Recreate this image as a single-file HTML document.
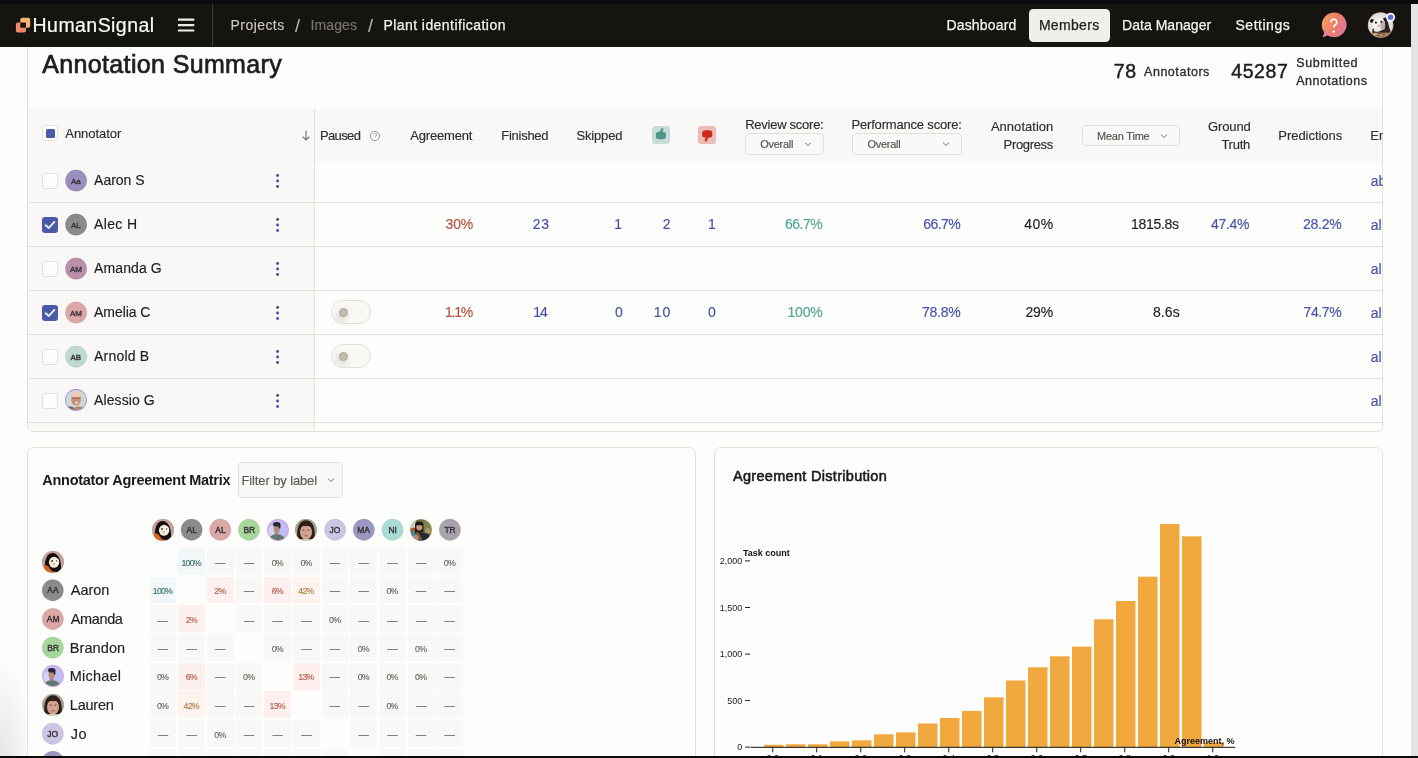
<!DOCTYPE html>
<html lang="en"><head><meta charset="utf-8"><title>Annotation Summary</title>
<style>
html,body{margin:0;padding:0}
body{width:1418px;height:758px;overflow:hidden;position:relative;background:#fdfdfc;font-family:'Liberation Sans', sans-serif;}
#root{position:absolute;left:0;top:0;width:1418px;height:758px;overflow:hidden;will-change:transform}
#root div,#root svg{position:absolute;box-sizing:border-box}
.t{position:absolute;white-space:pre;line-height:1;}
</style></head><body><div id="root">
<div style="left:27px;top:30px;width:1356px;height:402px;border:1px solid #e4e1d9;border-radius:0 0 6px 6px;background:#fdfdfc"></div>
<div style="left:28px;top:109px;width:1354px;height:53px;background:#f9f8f6;"></div>
<div style="left:28px;top:109px;width:286px;height:322px;background:#f9f8f6;border-radius:0 0 0 5px;"></div>
<div style="left:314px;top:109px;width:1px;height:322px;background:#e4e1d9;"></div>
<div style="left:28px;top:202px;width:1354px;height:1px;background:#e4e1d9;"></div>
<div style="left:28px;top:246px;width:1354px;height:1px;background:#e4e1d9;"></div>
<div style="left:28px;top:290px;width:1354px;height:1px;background:#e4e1d9;"></div>
<div style="left:28px;top:334px;width:1354px;height:1px;background:#e4e1d9;"></div>
<div style="left:28px;top:378px;width:1354px;height:1px;background:#e4e1d9;"></div>
<div style="left:28px;top:422px;width:1354px;height:1px;background:#e4e1d9;"></div>
<div style="left:42px;top:125.30000000000001px;width:16px;height:16px;border-radius:3px;background:#fefefd;border:1px solid #e3e0d8"></div>
<div style="left:45.5px;top:128.8px;width:9px;height:9px;border-radius:1.5px;background:#4b5aa9"></div>
<svg style="left:300px;top:129px" width="12" height="13" viewBox="0 0 12 13"><path d="M6 1.5 V11 M2.6 7.6 L6 11 L9.4 7.6" fill="none" stroke="#6f6c66" stroke-width="1.1"/></svg>
<svg style="left:369px;top:130px" width="12" height="12" viewBox="0 0 12 12"><circle cx="6" cy="6" r="4.6" fill="none" stroke="#8f8b82" stroke-width="0.9"/></svg>
<div style="left:652px;top:126px;width:18px;height:18px;border-radius:3.5px;background:#c5ddd6"></div>
<svg style="left:652px;top:126px" width="18" height="18" viewBox="0 0 18 18"><rect x="3.800" y="5.800" width="10.200" height="7.500" rx="3.200" fill="#52958a"/><path d="M8.300 7 L10.300 3.300" stroke="#52958a" stroke-width="2.300" stroke-linecap="round"/></svg>
<div style="left:698px;top:126px;width:18px;height:18px;border-radius:3.5px;background:#ecbcb7"></div>
<svg style="left:698px;top:126px" width="18" height="18" viewBox="0 0 18 18"><rect x="4.100" y="4.300" width="10.200" height="7.300" rx="3.200" fill="#cb2a1d"/><path d="M9.600 10.500 L7.800 14.400" stroke="#cb2a1d" stroke-width="2.300" stroke-linecap="round"/></svg>
<div style="left:745px;top:133.4px;width:78.5px;height:21.6px;border:1px solid #e3e0d8;border-radius:4px;background:#faf9f7"></div>
<svg style="left:803px;top:140.3px" width="10" height="8" viewBox="0 0 10 8"><path d="M2 2.6 L5 5.5 L8 2.6" fill="none" stroke="#7b7870" stroke-width="1"/></svg>
<div style="left:852px;top:133.4px;width:109.5px;height:21.6px;border:1px solid #e3e0d8;border-radius:4px;background:#faf9f7"></div>
<svg style="left:941.1px;top:140.3px" width="10" height="8" viewBox="0 0 10 8"><path d="M2 2.6 L5 5.5 L8 2.6" fill="none" stroke="#7b7870" stroke-width="1"/></svg>
<div style="left:1081.5px;top:125px;width:98px;height:21px;border:1px solid #e3e0d8;border-radius:4px;background:#faf9f7"></div>
<svg style="left:1159px;top:131.7px" width="10" height="8" viewBox="0 0 10 8"><path d="M2 2.6 L5 5.5 L8 2.6" fill="none" stroke="#7b7870" stroke-width="1"/></svg>
<div style="left:42px;top:172.5px;width:16px;height:16px;border-radius:3px;background:#fefefd;border:1px solid #e3e0d8"></div>
<svg style="left:64px;top:168px" width="24" height="24" viewBox="64 168 24 24"><circle cx="76.100" cy="180.55" r="10.750" fill="#9b90bd" stroke="rgba(0,0,0,.07)" stroke-width=".8"/></svg>
<svg style="left:272px;top:171.5px" width="12" height="18" viewBox="0 0 12 18"><circle cx="5.600" cy="3.5" r="1.450" fill="#3f4da3"/><circle cx="5.600" cy="9" r="1.450" fill="#3f4da3"/><circle cx="5.600" cy="14.5" r="1.450" fill="#3f4da3"/></svg>
<div style="left:42px;top:216.5px;width:16px;height:16px;border-radius:3px;background:#4b5aa9"></div>
<svg style="left:42px;top:216.5px" width="16" height="16" viewBox="0 0 16 16"><path d="M3.6 8.2 L6.7 11 L12.4 4.9" fill="none" stroke="#fff" stroke-width="1.7" stroke-linecap="round" stroke-linejoin="round"/></svg>
<svg style="left:64px;top:212px" width="24" height="24" viewBox="64 212 24 24"><circle cx="76.100" cy="224.55" r="10.750" fill="#8b8b8d" stroke="rgba(0,0,0,.07)" stroke-width=".8"/></svg>
<svg style="left:272px;top:215.5px" width="12" height="18" viewBox="0 0 12 18"><circle cx="5.600" cy="3.5" r="1.450" fill="#3f4da3"/><circle cx="5.600" cy="9" r="1.450" fill="#3f4da3"/><circle cx="5.600" cy="14.5" r="1.450" fill="#3f4da3"/></svg>
<div style="left:42px;top:260.5px;width:16px;height:16px;border-radius:3px;background:#fefefd;border:1px solid #e3e0d8"></div>
<svg style="left:64px;top:256px" width="24" height="24" viewBox="64 256 24 24"><circle cx="76.100" cy="268.55" r="10.750" fill="#b890a9" stroke="rgba(0,0,0,.07)" stroke-width=".8"/></svg>
<svg style="left:272px;top:259.5px" width="12" height="18" viewBox="0 0 12 18"><circle cx="5.600" cy="3.5" r="1.450" fill="#3f4da3"/><circle cx="5.600" cy="9" r="1.450" fill="#3f4da3"/><circle cx="5.600" cy="14.5" r="1.450" fill="#3f4da3"/></svg>
<div style="left:42px;top:304.5px;width:16px;height:16px;border-radius:3px;background:#4b5aa9"></div>
<svg style="left:42px;top:304.5px" width="16" height="16" viewBox="0 0 16 16"><path d="M3.6 8.2 L6.7 11 L12.4 4.9" fill="none" stroke="#fff" stroke-width="1.7" stroke-linecap="round" stroke-linejoin="round"/></svg>
<svg style="left:64px;top:300px" width="24" height="24" viewBox="64 300 24 24"><circle cx="76.100" cy="312.55" r="10.750" fill="#dca7a7" stroke="rgba(0,0,0,.07)" stroke-width=".8"/></svg>
<svg style="left:272px;top:303.5px" width="12" height="18" viewBox="0 0 12 18"><circle cx="5.600" cy="3.5" r="1.450" fill="#3f4da3"/><circle cx="5.600" cy="9" r="1.450" fill="#3f4da3"/><circle cx="5.600" cy="14.5" r="1.450" fill="#3f4da3"/></svg>
<div style="left:42px;top:348.5px;width:16px;height:16px;border-radius:3px;background:#fefefd;border:1px solid #e3e0d8"></div>
<svg style="left:64px;top:344px" width="24" height="24" viewBox="64 344 24 24"><circle cx="76.100" cy="356.55" r="10.750" fill="#bdd9d1" stroke="rgba(0,0,0,.07)" stroke-width=".8"/></svg>
<svg style="left:272px;top:347.5px" width="12" height="18" viewBox="0 0 12 18"><circle cx="5.600" cy="3.5" r="1.450" fill="#3f4da3"/><circle cx="5.600" cy="9" r="1.450" fill="#3f4da3"/><circle cx="5.600" cy="14.5" r="1.450" fill="#3f4da3"/></svg>
<div style="left:42px;top:392.5px;width:16px;height:16px;border-radius:3px;background:#fefefd;border:1px solid #e3e0d8"></div>
<svg style="left:65px;top:389.0px" width="22" height="22" viewBox="0 0 22 22"><defs><clipPath id="ag"><circle cx="11" cy="11" r="10.100"/></clipPath></defs><circle cx="11" cy="11" r="10.900" fill="#a08fd8"/><g clip-path="url(#ag)"><rect width="22" height="22" fill="#c9dbe0"/><ellipse cx="5" cy="21" rx="5" ry="3.500" fill="#5d6259"/><ellipse cx="14" cy="22" rx="7" ry="4.500" fill="#b08a62"/><ellipse cx="11.300" cy="9.500" rx="5.400" ry="7.800" fill="#e7b9a5"/><ellipse cx="11" cy="12" rx="4.600" ry="4" fill="#c98f7a"/><rect x="6.200" y="8.400" width="9.600" height="1.500" rx=".7" fill="#a86a58"/><ellipse cx="11.300" cy="5" rx="4.600" ry="3" fill="#efc8b6"/><ellipse cx="11.500" cy="13.600" rx="1.700" ry=".8" fill="#f6efe6"/></g></svg>
<svg style="left:272px;top:391.5px" width="12" height="18" viewBox="0 0 12 18"><circle cx="5.600" cy="3.5" r="1.450" fill="#3f4da3"/><circle cx="5.600" cy="9" r="1.450" fill="#3f4da3"/><circle cx="5.600" cy="14.5" r="1.450" fill="#3f4da3"/></svg>
<div style="left:331px;top:300.4px;width:40px;height:24px;border-radius:12px;border:1px solid #e3e0d8;background:#f8f7f4"></div>
<div style="left:338.5px;top:307.59999999999997px;width:9.6px;height:9.6px;border-radius:50%;background:#c3bdaf;border:0.8px solid #aea797;box-shadow:-2px 3px 6px rgba(60,50,30,.18)"></div>
<div style="left:331px;top:344.4px;width:40px;height:24px;border-radius:12px;border:1px solid #e3e0d8;background:#f8f7f4"></div>
<div style="left:338.5px;top:351.59999999999997px;width:9.6px;height:9.6px;border-radius:50%;background:#c3bdaf;border:0.8px solid #aea797;box-shadow:-2px 3px 6px rgba(60,50,30,.18)"></div>
<div style="left:27px;top:447px;width:669px;height:340px;border:1px solid #e4e1d9;border-radius:7px;background:#fdfdfc"></div>
<div style="left:714px;top:447px;width:669px;height:340px;border:1px solid #e4e1d9;border-radius:7px;background:#fdfdfc"></div>
<div style="left:237.5px;top:462px;width:105px;height:35.5px;border:1px solid #e3e0d8;border-radius:4px;background:#f9f8f6"></div>
<svg style="left:326px;top:476.3px" width="10" height="8" viewBox="0 0 10 8"><path d="M2 2.6 L5 5.5 L8 2.6" fill="none" stroke="#7b7870" stroke-width="1"/></svg>
<svg style="left:151.90px;top:518.80px" width="22" height="22" viewBox="0 0 22 22"><defs><clipPath id="c0"><circle cx="11" cy="11" r="10.9"/></clipPath></defs><circle cx="11" cy="11" r="10.900" fill="#c6a3a1"/><g clip-path="url(#c0)"><rect width="22" height="22" fill="#c4a09e"/><path d="M3 17 C2 8 6 2 10.500 2 C15.500 2 19.500 8 19 18 L15 21 L5 20z" fill="#15100f"/><path d="M1.500 13.500 L6 15 L11 21.500 L3 21z" fill="#d8641f"/><ellipse cx="12" cy="11.300" rx="5.100" ry="5.500" fill="#f1e9d6"/><ellipse cx="14.800" cy="11" rx="2.300" ry="3.600" fill="#fbf9f3"/><circle cx="10" cy="9.900" r=".9" fill="#3a2e22"/><circle cx="14.600" cy="9.900" r=".8" fill="#6b6a60"/><ellipse cx="12" cy="12.800" rx="1" ry=".9" fill="#e79c92"/></g></svg>
<svg style="left:179px;top:517px" width="24" height="24" viewBox="179 517 24 24"><circle cx="191.60" cy="529.80" r="10.700" fill="#8b8b8d" stroke="rgba(0,0,0,.08)" stroke-width=".8"/></svg>
<svg style="left:208px;top:517px" width="24" height="24" viewBox="208 517 24 24"><circle cx="220.30" cy="529.80" r="10.700" fill="#dca7a7" stroke="rgba(0,0,0,.08)" stroke-width=".8"/></svg>
<svg style="left:237px;top:517px" width="24" height="24" viewBox="237 517 24 24"><circle cx="249.00" cy="529.80" r="10.700" fill="#a6d89b" stroke="rgba(0,0,0,.08)" stroke-width=".8"/></svg>
<svg style="left:266.70px;top:518.80px" width="22" height="22" viewBox="0 0 22 22"><defs><clipPath id="c4"><circle cx="11" cy="11" r="10.2"/></clipPath></defs><circle cx="11" cy="11" r="10.900" fill="#d79ad3"/><g clip-path="url(#c4)"><rect width="22" height="22" fill="#bebef3"/><ellipse cx="4.500" cy="13" rx="3" ry="6" fill="#d2d2f8"/><ellipse cx="9.800" cy="20.300" rx="7.800" ry="5" fill="#5f796c"/><rect x="8.200" y="12" width="3" height="4" fill="#a87a68"/><ellipse cx="9.600" cy="9.800" rx="3" ry="4.200" fill="#b98b79"/><ellipse cx="9.700" cy="5.300" rx="3.700" ry="2.300" fill="#2b2430"/><ellipse cx="12.500" cy="7.500" rx="1" ry="2.200" fill="#2b2430"/></g></svg>
<svg style="left:295.40px;top:518.80px" width="22" height="22" viewBox="0 0 22 22"><defs><clipPath id="c5"><circle cx="11" cy="11" r="10.9"/></clipPath></defs><circle cx="11" cy="11" r="10.900" fill="#a9a48f"/><g clip-path="url(#c5)"><rect width="22" height="22" fill="#a9a48f"/><path d="M2.500 20 C1 8 5 1.300 11 1.300 C17 1.300 21 8 19.500 20z" fill="#2c201b"/><ellipse cx="11" cy="13" rx="6" ry="7.600" fill="#d2a48f"/><path d="M5 9 C6 4.500 9 4.600 11 5.600 C13 4.600 16 4.500 17 9 C15 6.500 13 6.800 11 7.200 C9 6.800 7 6.500 5 9z" fill="#2c201b"/><ellipse cx="8.600" cy="11" rx="1.200" ry=".6" fill="#5a4036"/><ellipse cx="13.400" cy="11" rx="1.200" ry=".6" fill="#5a4036"/><ellipse cx="11" cy="16.600" rx="2.200" ry=".9" fill="#b86d72"/><rect x="7" y="20.500" width="8" height="2" fill="#dfe0d6"/></g></svg>
<svg style="left:323px;top:517px" width="24" height="24" viewBox="323 517 24 24"><circle cx="335.10" cy="529.80" r="10.700" fill="#cdc4e6" stroke="rgba(0,0,0,.08)" stroke-width=".8"/></svg>
<svg style="left:351px;top:517px" width="24" height="24" viewBox="351 517 24 24"><circle cx="363.80" cy="529.80" r="10.700" fill="#9a98c1" stroke="rgba(0,0,0,.08)" stroke-width=".8"/></svg>
<svg style="left:380px;top:517px" width="24" height="24" viewBox="380 517 24 24"><circle cx="392.50" cy="529.80" r="10.700" fill="#a9dcd5" stroke="rgba(0,0,0,.08)" stroke-width=".8"/></svg>
<svg style="left:410.20px;top:518.80px" width="22" height="22" viewBox="0 0 22 22"><defs><clipPath id="c9"><circle cx="11" cy="11" r="10.5"/></clipPath></defs><circle cx="11" cy="11" r="10.900" fill="#a4b184"/><g clip-path="url(#c9)"><rect width="22" height="22" fill="#6b6d3c"/><ellipse cx="17" cy="7" rx="5" ry="6" fill="#7f8446"/><ellipse cx="18" cy="12" rx="3" ry="3" fill="#a79a63"/><ellipse cx="3" cy="6" rx="4" ry="5" fill="#cfd3cf"/><path d="M9 13 L19 15 L20 22 L8 22z" fill="#232830"/><ellipse cx="2.800" cy="15" rx="2.400" ry="3.500" fill="#3c8aa6"/><ellipse cx="3.200" cy="10.500" rx="2.200" ry="2" fill="#a9512b"/><path d="M5 5 C5 1.500 13 1.500 13.500 5 L13.500 13 L5 15z" fill="#2a1d19"/><ellipse cx="9.300" cy="7.800" rx="3" ry="3.800" fill="#c79b86"/><rect x="5.800" y="3.800" width="7.200" height="2.500" rx="1.100" fill="#16161a"/><path d="M7 13 C9 14 11 17 12 21 L8 21 C8 18 6 15 5 14z" fill="#8a5a36"/><ellipse cx="5.500" cy="18.500" rx="3" ry="2.500" fill="#b9868a"/></g></svg>
<svg style="left:437px;top:517px" width="24" height="24" viewBox="437 517 24 24"><circle cx="449.90" cy="529.80" r="10.700" fill="#a9a1ab" stroke="rgba(0,0,0,.08)" stroke-width=".8"/></svg>
<svg style="left:41.80px;top:550.60px" width="22" height="22" viewBox="0 0 22 22"><defs><clipPath id="r0"><circle cx="11" cy="11" r="10.9"/></clipPath></defs><circle cx="11" cy="11" r="10.900" fill="#c6a3a1"/><g clip-path="url(#r0)"><rect width="22" height="22" fill="#c4a09e"/><path d="M3 17 C2 8 6 2 10.500 2 C15.500 2 19.500 8 19 18 L15 21 L5 20z" fill="#15100f"/><path d="M1.500 13.500 L6 15 L11 21.500 L3 21z" fill="#d8641f"/><ellipse cx="12" cy="11.300" rx="5.100" ry="5.500" fill="#f1e9d6"/><ellipse cx="14.800" cy="11" rx="2.300" ry="3.600" fill="#fbf9f3"/><circle cx="10" cy="9.900" r=".9" fill="#3a2e22"/><circle cx="14.600" cy="9.900" r=".8" fill="#6b6a60"/><ellipse cx="12" cy="12.800" rx="1" ry=".9" fill="#e79c92"/></g></svg>
<div style="left:178.28px;top:548.0px;width:26.8px;height:26.8px;background:#f2f8f9;"></div>
<div style="left:206.96px;top:548.0px;width:26.8px;height:26.8px;background:#f9f8f6;"></div>
<div style="left:235.64px;top:548.0px;width:26.8px;height:26.8px;background:#f9f8f6;"></div>
<div style="left:264.32px;top:548.0px;width:26.8px;height:26.8px;background:#f9f8f6;"></div>
<div style="left:293.0px;top:548.0px;width:26.8px;height:26.8px;background:#f9f8f6;"></div>
<div style="left:321.68px;top:548.0px;width:26.8px;height:26.8px;background:#f9f8f6;"></div>
<div style="left:350.36px;top:548.0px;width:26.8px;height:26.8px;background:#f9f8f6;"></div>
<div style="left:379.04px;top:548.0px;width:26.8px;height:26.8px;background:#f9f8f6;"></div>
<div style="left:407.72px;top:548.0px;width:26.8px;height:26.8px;background:#f9f8f6;"></div>
<div style="left:436.4px;top:548.0px;width:26.8px;height:26.8px;background:#f9f8f6;"></div>
<svg style="left:40px;top:578px" width="24" height="24" viewBox="40 578 24 24"><circle cx="52.80" cy="590.28" r="10.700" fill="#8b8b8d" stroke="rgba(0,0,0,.08)" stroke-width=".8"/></svg>
<div style="left:149.6px;top:576.68px;width:26.8px;height:26.8px;background:#f2f8f9;"></div>
<div style="left:206.96px;top:576.68px;width:26.8px;height:26.8px;background:#fdf0ee;"></div>
<div style="left:235.64px;top:576.68px;width:26.8px;height:26.8px;background:#f9f8f6;"></div>
<div style="left:264.32px;top:576.68px;width:26.8px;height:26.8px;background:#fdf0ee;"></div>
<div style="left:293.0px;top:576.68px;width:26.8px;height:26.8px;background:#fef4ed;"></div>
<div style="left:321.68px;top:576.68px;width:26.8px;height:26.8px;background:#f9f8f6;"></div>
<div style="left:350.36px;top:576.68px;width:26.8px;height:26.8px;background:#f9f8f6;"></div>
<div style="left:379.04px;top:576.68px;width:26.8px;height:26.8px;background:#f9f8f6;"></div>
<div style="left:407.72px;top:576.68px;width:26.8px;height:26.8px;background:#f9f8f6;"></div>
<div style="left:436.4px;top:576.68px;width:26.8px;height:26.8px;background:#f9f8f6;"></div>
<svg style="left:40px;top:606px" width="24" height="24" viewBox="40 606 24 24"><circle cx="52.80" cy="618.96" r="10.700" fill="#dca7a7" stroke="rgba(0,0,0,.08)" stroke-width=".8"/></svg>
<div style="left:149.6px;top:605.36px;width:26.8px;height:26.8px;background:#f9f8f6;"></div>
<div style="left:178.28px;top:605.36px;width:26.8px;height:26.8px;background:#fdf0ee;"></div>
<div style="left:235.64px;top:605.36px;width:26.8px;height:26.8px;background:#f9f8f6;"></div>
<div style="left:264.32px;top:605.36px;width:26.8px;height:26.8px;background:#f9f8f6;"></div>
<div style="left:293.0px;top:605.36px;width:26.8px;height:26.8px;background:#f9f8f6;"></div>
<div style="left:321.68px;top:605.36px;width:26.8px;height:26.8px;background:#f9f8f6;"></div>
<div style="left:350.36px;top:605.36px;width:26.8px;height:26.8px;background:#f9f8f6;"></div>
<div style="left:379.04px;top:605.36px;width:26.8px;height:26.8px;background:#f9f8f6;"></div>
<div style="left:407.72px;top:605.36px;width:26.8px;height:26.8px;background:#f9f8f6;"></div>
<div style="left:436.4px;top:605.36px;width:26.8px;height:26.8px;background:#f9f8f6;"></div>
<svg style="left:40px;top:635px" width="24" height="24" viewBox="40 635 24 24"><circle cx="52.80" cy="647.64" r="10.700" fill="#a6d89b" stroke="rgba(0,0,0,.08)" stroke-width=".8"/></svg>
<div style="left:149.6px;top:634.04px;width:26.8px;height:26.8px;background:#f9f8f6;"></div>
<div style="left:178.28px;top:634.04px;width:26.8px;height:26.8px;background:#f9f8f6;"></div>
<div style="left:206.96px;top:634.04px;width:26.8px;height:26.8px;background:#f9f8f6;"></div>
<div style="left:264.32px;top:634.04px;width:26.8px;height:26.8px;background:#f9f8f6;"></div>
<div style="left:293.0px;top:634.04px;width:26.8px;height:26.8px;background:#f9f8f6;"></div>
<div style="left:321.68px;top:634.04px;width:26.8px;height:26.8px;background:#f9f8f6;"></div>
<div style="left:350.36px;top:634.04px;width:26.8px;height:26.8px;background:#f9f8f6;"></div>
<div style="left:379.04px;top:634.04px;width:26.8px;height:26.8px;background:#f9f8f6;"></div>
<div style="left:407.72px;top:634.04px;width:26.8px;height:26.8px;background:#f9f8f6;"></div>
<div style="left:436.4px;top:634.04px;width:26.8px;height:26.8px;background:#f9f8f6;"></div>
<svg style="left:41.80px;top:665.32px" width="22" height="22" viewBox="0 0 22 22"><defs><clipPath id="r4"><circle cx="11" cy="11" r="10.2"/></clipPath></defs><circle cx="11" cy="11" r="10.900" fill="#d79ad3"/><g clip-path="url(#r4)"><rect width="22" height="22" fill="#bebef3"/><ellipse cx="4.500" cy="13" rx="3" ry="6" fill="#d2d2f8"/><ellipse cx="9.800" cy="20.300" rx="7.800" ry="5" fill="#5f796c"/><rect x="8.200" y="12" width="3" height="4" fill="#a87a68"/><ellipse cx="9.600" cy="9.800" rx="3" ry="4.200" fill="#b98b79"/><ellipse cx="9.700" cy="5.300" rx="3.700" ry="2.300" fill="#2b2430"/><ellipse cx="12.500" cy="7.500" rx="1" ry="2.200" fill="#2b2430"/></g></svg>
<div style="left:149.6px;top:662.72px;width:26.8px;height:26.8px;background:#f9f8f6;"></div>
<div style="left:178.28px;top:662.72px;width:26.8px;height:26.8px;background:#fdf0ee;"></div>
<div style="left:206.96px;top:662.72px;width:26.8px;height:26.8px;background:#f9f8f6;"></div>
<div style="left:235.64px;top:662.72px;width:26.8px;height:26.8px;background:#f9f8f6;"></div>
<div style="left:293.0px;top:662.72px;width:26.8px;height:26.8px;background:#fdf0ee;"></div>
<div style="left:321.68px;top:662.72px;width:26.8px;height:26.8px;background:#f9f8f6;"></div>
<div style="left:350.36px;top:662.72px;width:26.8px;height:26.8px;background:#f9f8f6;"></div>
<div style="left:379.04px;top:662.72px;width:26.8px;height:26.8px;background:#f9f8f6;"></div>
<div style="left:407.72px;top:662.72px;width:26.8px;height:26.8px;background:#f9f8f6;"></div>
<div style="left:436.4px;top:662.72px;width:26.8px;height:26.8px;background:#f9f8f6;"></div>
<svg style="left:41.80px;top:694.00px" width="22" height="22" viewBox="0 0 22 22"><defs><clipPath id="r5"><circle cx="11" cy="11" r="10.9"/></clipPath></defs><circle cx="11" cy="11" r="10.900" fill="#a9a48f"/><g clip-path="url(#r5)"><rect width="22" height="22" fill="#a9a48f"/><path d="M2.500 20 C1 8 5 1.300 11 1.300 C17 1.300 21 8 19.500 20z" fill="#2c201b"/><ellipse cx="11" cy="13" rx="6" ry="7.600" fill="#d2a48f"/><path d="M5 9 C6 4.500 9 4.600 11 5.600 C13 4.600 16 4.500 17 9 C15 6.500 13 6.800 11 7.200 C9 6.800 7 6.500 5 9z" fill="#2c201b"/><ellipse cx="8.600" cy="11" rx="1.200" ry=".6" fill="#5a4036"/><ellipse cx="13.400" cy="11" rx="1.200" ry=".6" fill="#5a4036"/><ellipse cx="11" cy="16.600" rx="2.200" ry=".9" fill="#b86d72"/><rect x="7" y="20.500" width="8" height="2" fill="#dfe0d6"/></g></svg>
<div style="left:149.6px;top:691.4px;width:26.8px;height:26.8px;background:#f9f8f6;"></div>
<div style="left:178.28px;top:691.4px;width:26.8px;height:26.8px;background:#fef4ed;"></div>
<div style="left:206.96px;top:691.4px;width:26.8px;height:26.8px;background:#f9f8f6;"></div>
<div style="left:235.64px;top:691.4px;width:26.8px;height:26.8px;background:#f9f8f6;"></div>
<div style="left:264.32px;top:691.4px;width:26.8px;height:26.8px;background:#fdf0ee;"></div>
<div style="left:321.68px;top:691.4px;width:26.8px;height:26.8px;background:#f9f8f6;"></div>
<div style="left:350.36px;top:691.4px;width:26.8px;height:26.8px;background:#f9f8f6;"></div>
<div style="left:379.04px;top:691.4px;width:26.8px;height:26.8px;background:#f9f8f6;"></div>
<div style="left:407.72px;top:691.4px;width:26.8px;height:26.8px;background:#f9f8f6;"></div>
<div style="left:436.4px;top:691.4px;width:26.8px;height:26.8px;background:#f9f8f6;"></div>
<svg style="left:40px;top:721px" width="24" height="24" viewBox="40 721 24 24"><circle cx="52.80" cy="733.68" r="10.700" fill="#cdc4e6" stroke="rgba(0,0,0,.08)" stroke-width=".8"/></svg>
<div style="left:149.6px;top:720.08px;width:26.8px;height:26.8px;background:#f9f8f6;"></div>
<div style="left:178.28px;top:720.08px;width:26.8px;height:26.8px;background:#f9f8f6;"></div>
<div style="left:206.96px;top:720.08px;width:26.8px;height:26.8px;background:#f9f8f6;"></div>
<div style="left:235.64px;top:720.08px;width:26.8px;height:26.8px;background:#f9f8f6;"></div>
<div style="left:264.32px;top:720.08px;width:26.8px;height:26.8px;background:#f9f8f6;"></div>
<div style="left:293.0px;top:720.08px;width:26.8px;height:26.8px;background:#f9f8f6;"></div>
<div style="left:350.36px;top:720.08px;width:26.8px;height:26.8px;background:#f9f8f6;"></div>
<div style="left:379.04px;top:720.08px;width:26.8px;height:26.8px;background:#f9f8f6;"></div>
<div style="left:407.72px;top:720.08px;width:26.8px;height:26.8px;background:#f9f8f6;"></div>
<div style="left:436.4px;top:720.08px;width:26.8px;height:26.8px;background:#f9f8f6;"></div>
<div style="left:41.8px;top:751.36px;width:22px;height:22px;border-radius:50%;background:#9a98c1"></div>
<div style="left:149.6px;top:748.76px;width:26.8px;height:26.8px;background:#f9f8f6;"></div>
<div style="left:178.28px;top:748.76px;width:26.8px;height:26.8px;background:#f9f8f6;"></div>
<div style="left:206.96px;top:748.76px;width:26.8px;height:26.8px;background:#f9f8f6;"></div>
<div style="left:235.64px;top:748.76px;width:26.8px;height:26.8px;background:#f9f8f6;"></div>
<div style="left:264.32px;top:748.76px;width:26.8px;height:26.8px;background:#f9f8f6;"></div>
<div style="left:293.0px;top:748.76px;width:26.8px;height:26.8px;background:#f9f8f6;"></div>
<div style="left:321.68px;top:748.76px;width:26.8px;height:26.8px;background:#f9f8f6;"></div>
<div style="left:379.04px;top:748.76px;width:26.8px;height:26.8px;background:#f9f8f6;"></div>
<div style="left:407.72px;top:748.76px;width:26.8px;height:26.8px;background:#f9f8f6;"></div>
<div style="left:436.4px;top:748.76px;width:26.8px;height:26.8px;background:#f9f8f6;"></div>
<svg style="left:714px;top:500px" width="668" height="258" viewBox="714 500 668 258" font-family="'Liberation Sans', sans-serif"><rect x="764.0" y="744.8" width="19.5" height="2.5" fill="#f1a93f"/><rect x="786.0" y="744.3" width="19.5" height="3.0" fill="#f1a93f"/><rect x="808.0" y="744.3" width="19.5" height="3.0" fill="#f1a93f"/><rect x="830.0" y="741.3" width="19.5" height="6.0" fill="#f1a93f"/><rect x="852.0" y="740.3" width="19.5" height="7.0" fill="#f1a93f"/><rect x="874.0" y="734.3" width="19.5" height="13.0" fill="#f1a93f"/><rect x="896.0" y="732.3" width="19.5" height="15.0" fill="#f1a93f"/><rect x="918.0" y="723.5" width="19.5" height="23.8" fill="#f1a93f"/><rect x="940.0" y="718.0" width="19.5" height="29.3" fill="#f1a93f"/><rect x="962.0" y="710.9" width="19.5" height="36.4" fill="#f1a93f"/><rect x="984.0" y="697.3" width="19.5" height="50.0" fill="#f1a93f"/><rect x="1006.0" y="680.5" width="19.5" height="66.8" fill="#f1a93f"/><rect x="1028.0" y="667.3" width="19.5" height="80.0" fill="#f1a93f"/><rect x="1050.0" y="656.3" width="19.5" height="91.0" fill="#f1a93f"/><rect x="1072.0" y="646.6" width="19.5" height="100.7" fill="#f1a93f"/><rect x="1094.0" y="619.3" width="19.5" height="128.0" fill="#f1a93f"/><rect x="1116.0" y="601.0" width="19.5" height="146.3" fill="#f1a93f"/><rect x="1138.0" y="576.7" width="19.5" height="170.6" fill="#f1a93f"/><rect x="1160.0" y="524.0" width="19.5" height="223.3" fill="#f1a93f"/><rect x="1182.0" y="536.3" width="19.5" height="211.0" fill="#f1a93f"/><rect x="1204.0" y="742.3" width="19.5" height="5.0" fill="#f1a93f"/><path d="M750.5 747.3 H1235.2" stroke="#111" stroke-width="1"/><path d="M772.7 747.5 V752.3" stroke="#222" stroke-width="1"/><path d="M816.7 747.5 V752.3" stroke="#222" stroke-width="1"/><path d="M860.7 747.5 V752.3" stroke="#222" stroke-width="1"/><path d="M904.7 747.5 V752.3" stroke="#222" stroke-width="1"/><path d="M948.7 747.5 V752.3" stroke="#222" stroke-width="1"/><path d="M992.7 747.5 V752.3" stroke="#222" stroke-width="1"/><path d="M1036.7 747.5 V752.3" stroke="#222" stroke-width="1"/><path d="M1080.7 747.5 V752.3" stroke="#222" stroke-width="1"/><path d="M1124.7 747.5 V752.3" stroke="#222" stroke-width="1"/><path d="M1168.7 747.5 V752.3" stroke="#222" stroke-width="1"/><path d="M1212.7 747.5 V752.3" stroke="#222" stroke-width="1"/><path d="M745 747.1 H750" stroke="#222" stroke-width="1"/><text x="742.3" y="750.3000000000001" font-size="9" text-anchor="end" fill="#222">0</text><path d="M745 700.6 H750" stroke="#222" stroke-width="1"/><text x="742.3" y="703.8000000000001" font-size="9" text-anchor="end" fill="#222">500</text><path d="M745 654.1 H750" stroke="#222" stroke-width="1"/><text x="742.3" y="657.3000000000001" font-size="9" text-anchor="end" fill="#222">1,000</text><path d="M745 607.5 H750" stroke="#222" stroke-width="1"/><text x="742.3" y="610.7" font-size="9" text-anchor="end" fill="#222">1,500</text><path d="M745 560.9 H750" stroke="#222" stroke-width="1"/><text x="742.3" y="564.1" font-size="9" text-anchor="end" fill="#222">2,000</text><text x="743" y="556.4" font-size="9" font-weight="700" fill="#111">Task count</text><text x="1234.5" y="743.6" font-size="9" font-weight="700" text-anchor="end" fill="#111">Agreement, %</text><text x="772.7" y="760.9" font-size="9" text-anchor="middle" fill="#222">0.0</text><text x="816.7" y="760.9" font-size="9" text-anchor="middle" fill="#222">0.1</text><text x="860.7" y="760.9" font-size="9" text-anchor="middle" fill="#222">0.2</text><text x="904.7" y="760.9" font-size="9" text-anchor="middle" fill="#222">0.3</text><text x="948.7" y="760.9" font-size="9" text-anchor="middle" fill="#222">0.4</text><text x="992.7" y="760.9" font-size="9" text-anchor="middle" fill="#222">0.5</text><text x="1036.7" y="760.9" font-size="9" text-anchor="middle" fill="#222">0.6</text><text x="1080.7" y="760.9" font-size="9" text-anchor="middle" fill="#222">0.7</text><text x="1124.7" y="760.9" font-size="9" text-anchor="middle" fill="#222">0.8</text><text x="1168.7" y="760.9" font-size="9" text-anchor="middle" fill="#222">0.9</text><text x="1212.7" y="760.9" font-size="9" text-anchor="middle" fill="#222">1.0</text></svg>
<span class="t" style="left:42.20px;top:51.64px;font-size:25px;color:#1f1e1b;letter-spacing:0.359px;-webkit-text-stroke:0.7px #1f1e1b;">Annotation Summary</span>
<span class="t" style="left:1113.80px;top:62.49px;font-size:19.5px;color:#1f1e1b;letter-spacing:0.500px;-webkit-text-stroke:0.45px #1f1e1b;">78</span>
<span class="t" style="left:1144.00px;top:66.42px;font-size:12.5px;color:#2b2a27;letter-spacing:0.544px;-webkit-text-stroke:0.3px #2b2a27;">Annotators</span>
<span class="t" style="left:1231.20px;top:62.49px;font-size:19.5px;color:#1f1e1b;letter-spacing:0.600px;-webkit-text-stroke:0.45px #1f1e1b;">45287</span>
<span class="t" style="left:1296.30px;top:57.42px;font-size:12.5px;color:#2b2a27;letter-spacing:0.612px;-webkit-text-stroke:0.3px #2b2a27;">Submitted</span>
<span class="t" style="left:1296.30px;top:75.42px;font-size:12.5px;color:#2b2a27;letter-spacing:0.460px;-webkit-text-stroke:0.3px #2b2a27;">Annotations</span>
<span class="t" style="left:65.30px;top:127.30px;font-size:13px;color:#2f2e2b;letter-spacing:-0.037px;-webkit-text-stroke:0.15px #2f2e2b;">Annotator</span>
<span class="t" style="left:320.00px;top:129.00px;font-size:13px;color:#2f2e2b;letter-spacing:-0.640px;-webkit-text-stroke:0.15px #2f2e2b;">Paused</span>
<span class="t" style="left:373.20px;top:131.95px;font-size:7.5px;color:#8f8b82;">?</span>
<span class="t" style="left:410.30px;top:129.00px;font-size:13px;color:#2f2e2b;letter-spacing:-0.188px;-webkit-text-stroke:0.15px #2f2e2b;">Agreement</span>
<span class="t" style="left:501.30px;top:129.00px;font-size:13px;color:#2f2e2b;letter-spacing:-0.271px;-webkit-text-stroke:0.15px #2f2e2b;">Finished</span>
<span class="t" style="left:576.50px;top:129.00px;font-size:13px;color:#2f2e2b;letter-spacing:-0.167px;-webkit-text-stroke:0.15px #2f2e2b;">Skipped</span>
<span class="t" style="left:745.20px;top:118.20px;font-size:13px;color:#2f2e2b;letter-spacing:-0.258px;-webkit-text-stroke:0.15px #2f2e2b;">Review score:</span>
<span class="t" style="left:851.50px;top:118.20px;font-size:13px;color:#2f2e2b;letter-spacing:-0.182px;-webkit-text-stroke:0.15px #2f2e2b;">Performance score:</span>
<span class="t" style="left:760.30px;top:138.69px;font-size:11px;color:#55524c;letter-spacing:-0.283px;-webkit-text-stroke:0.15px #55524c;">Overall</span>
<span class="t" style="left:867.50px;top:138.69px;font-size:11px;color:#55524c;letter-spacing:-0.283px;-webkit-text-stroke:0.15px #55524c;">Overall</span>
<span class="t" style="left:990.90px;top:120.00px;font-size:13px;color:#2f2e2b;letter-spacing:0.033px;-webkit-text-stroke:0.15px #2f2e2b;">Annotation</span>
<span class="t" style="left:1003.60px;top:138.00px;font-size:13px;color:#2f2e2b;letter-spacing:-0.343px;-webkit-text-stroke:0.15px #2f2e2b;">Progress</span>
<span class="t" style="left:1097.00px;top:130.69px;font-size:11px;color:#55524c;letter-spacing:-0.213px;-webkit-text-stroke:0.15px #55524c;">Mean Time</span>
<span class="t" style="left:1207.90px;top:120.00px;font-size:13px;color:#2f2e2b;letter-spacing:-0.100px;-webkit-text-stroke:0.15px #2f2e2b;">Ground</span>
<span class="t" style="left:1221.40px;top:138.00px;font-size:13px;color:#2f2e2b;letter-spacing:-0.250px;-webkit-text-stroke:0.15px #2f2e2b;">Truth</span>
<span class="t" style="left:1278.30px;top:129.00px;font-size:13px;color:#2f2e2b;letter-spacing:-0.040px;-webkit-text-stroke:0.15px #2f2e2b;">Predictions</span>
<span class="t" style="left:1370.30px;top:129.00px;font-size:13px;color:#2f2e2b;-webkit-text-stroke:0.15px #2f2e2b;">Email</span>
<span class="t" style="left:71.00px;top:177.73px;font-size:8px;color:#37343c;-webkit-text-stroke:0.4px #37343c;">Aa</span>
<span class="t" style="left:94.10px;top:172.55px;font-size:14px;color:#1f1e1b;letter-spacing:-0.017px;-webkit-text-stroke:0.15px #1f1e1b;">Aaron S</span>
<span class="t" style="left:1370.80px;top:173.65px;font-size:14px;color:#4552a4;-webkit-text-stroke:0.15px #4552a4;">ab</span>
<span class="t" style="left:71.00px;top:221.73px;font-size:8px;color:#37343c;-webkit-text-stroke:0.4px #37343c;">AL</span>
<span class="t" style="left:94.10px;top:216.55px;font-size:14px;color:#1f1e1b;letter-spacing:0.340px;-webkit-text-stroke:0.15px #1f1e1b;">Alec H</span>
<span class="t" style="left:1370.80px;top:217.65px;font-size:14px;color:#4552a4;-webkit-text-stroke:0.15px #4552a4;">al</span>
<span class="t" style="left:70.00px;top:265.73px;font-size:8px;color:#37343c;-webkit-text-stroke:0.4px #37343c;">AM</span>
<span class="t" style="left:94.10px;top:260.55px;font-size:14px;color:#1f1e1b;letter-spacing:0.086px;-webkit-text-stroke:0.15px #1f1e1b;">Amanda G</span>
<span class="t" style="left:1370.80px;top:261.65px;font-size:14px;color:#4552a4;-webkit-text-stroke:0.15px #4552a4;">al</span>
<span class="t" style="left:70.00px;top:309.73px;font-size:8px;color:#37343c;-webkit-text-stroke:0.4px #37343c;">AM</span>
<span class="t" style="left:94.10px;top:304.55px;font-size:14px;color:#1f1e1b;letter-spacing:-0.071px;-webkit-text-stroke:0.15px #1f1e1b;">Amelia C</span>
<span class="t" style="left:1370.80px;top:305.65px;font-size:14px;color:#4552a4;-webkit-text-stroke:0.15px #4552a4;">al</span>
<span class="t" style="left:70.50px;top:353.73px;font-size:8px;color:#37343c;-webkit-text-stroke:0.4px #37343c;">AB</span>
<span class="t" style="left:94.10px;top:348.55px;font-size:14px;color:#1f1e1b;letter-spacing:0.186px;-webkit-text-stroke:0.15px #1f1e1b;">Arnold B</span>
<span class="t" style="left:1370.80px;top:349.65px;font-size:14px;color:#4552a4;-webkit-text-stroke:0.15px #4552a4;">al</span>
<span class="t" style="left:94.10px;top:392.55px;font-size:14px;color:#1f1e1b;letter-spacing:0.075px;-webkit-text-stroke:0.15px #1f1e1b;">Alessio G</span>
<span class="t" style="left:1370.80px;top:393.65px;font-size:14px;color:#4552a4;-webkit-text-stroke:0.15px #4552a4;">al</span>
<span class="t" style="left:445.40px;top:216.55px;font-size:14px;color:#b4503c;letter-spacing:-0.050px;-webkit-text-stroke:0.15px #b4503c;">30%</span>
<span class="t" style="left:532.70px;top:216.55px;font-size:14px;color:#4552a4;letter-spacing:0.800px;-webkit-text-stroke:0.15px #4552a4;">23</span>
<span class="t" style="left:614.20px;top:216.55px;font-size:14px;color:#4552a4;-webkit-text-stroke:0.15px #4552a4;">1</span>
<span class="t" style="left:662.80px;top:216.55px;font-size:14px;color:#4552a4;-webkit-text-stroke:0.15px #4552a4;">2</span>
<span class="t" style="left:708.10px;top:216.55px;font-size:14px;color:#4552a4;-webkit-text-stroke:0.15px #4552a4;">1</span>
<span class="t" style="left:785.00px;top:216.55px;font-size:14px;color:#4fa595;letter-spacing:-0.500px;-webkit-text-stroke:0.15px #4fa595;">66.7%</span>
<span class="t" style="left:923.30px;top:216.55px;font-size:14px;color:#4552a4;letter-spacing:-0.575px;-webkit-text-stroke:0.15px #4552a4;">66.7%</span>
<span class="t" style="left:1024.30px;top:216.55px;font-size:14px;color:#1f1e1b;letter-spacing:0.400px;-webkit-text-stroke:0.15px #1f1e1b;">40%</span>
<span class="t" style="left:1131.00px;top:216.55px;font-size:14px;color:#1f1e1b;letter-spacing:-0.283px;-webkit-text-stroke:0.15px #1f1e1b;">1815.8s</span>
<span class="t" style="left:1211.00px;top:216.55px;font-size:14px;color:#4552a4;letter-spacing:-0.300px;-webkit-text-stroke:0.15px #4552a4;">47.4%</span>
<span class="t" style="left:1303.10px;top:216.55px;font-size:14px;color:#4552a4;letter-spacing:-0.275px;-webkit-text-stroke:0.15px #4552a4;">28.2%</span>
<span class="t" style="left:445.08px;top:304.55px;font-size:14px;color:#b4503c;letter-spacing:-1.260px;-webkit-text-stroke:0.15px #b4503c;">1.1%</span>
<span class="t" style="left:533.20px;top:304.55px;font-size:14px;color:#4552a4;letter-spacing:-1.000px;-webkit-text-stroke:0.15px #4552a4;">14</span>
<span class="t" style="left:615.10px;top:304.55px;font-size:14px;color:#4552a4;-webkit-text-stroke:0.15px #4552a4;">0</span>
<span class="t" style="left:653.80px;top:304.55px;font-size:14px;color:#4552a4;letter-spacing:1.000px;-webkit-text-stroke:0.15px #4552a4;">10</span>
<span class="t" style="left:708.10px;top:304.55px;font-size:14px;color:#4552a4;-webkit-text-stroke:0.15px #4552a4;">0</span>
<span class="t" style="left:787.40px;top:304.55px;font-size:14px;color:#4fa595;letter-spacing:-0.133px;-webkit-text-stroke:0.15px #4fa595;">100%</span>
<span class="t" style="left:922.10px;top:304.55px;font-size:14px;color:#4552a4;letter-spacing:-0.275px;-webkit-text-stroke:0.15px #4552a4;">78.8%</span>
<span class="t" style="left:1025.50px;top:304.55px;font-size:14px;color:#1f1e1b;letter-spacing:-0.200px;-webkit-text-stroke:0.15px #1f1e1b;">29%</span>
<span class="t" style="left:1152.90px;top:304.55px;font-size:14px;color:#1f1e1b;letter-spacing:0.133px;-webkit-text-stroke:0.15px #1f1e1b;">8.6s</span>
<span class="t" style="left:1303.50px;top:304.55px;font-size:14px;color:#4552a4;letter-spacing:-0.375px;-webkit-text-stroke:0.15px #4552a4;">74.7%</span>
<span class="t" style="left:42.30px;top:472.73px;font-size:14.5px;color:#1b1a18;font-weight:700;letter-spacing:-0.280px;">Annotator Agreement Matrix</span>
<span class="t" style="left:241.50px;top:473.60px;font-size:13px;color:#5c5953;letter-spacing:-0.121px;-webkit-text-stroke:0.15px #5c5953;">Filter by label</span>
<span class="t" style="left:733.00px;top:468.93px;font-size:14.5px;color:#1b1a18;letter-spacing:0.300px;-webkit-text-stroke:0.55px #1b1a18;">Agreement Distribution</span>
<span class="t" style="left:186.60px;top:525.79px;font-size:8.4px;color:#3a383a;-webkit-text-stroke:0.45px #3a383a;">AL</span>
<span class="t" style="left:215.30px;top:525.79px;font-size:8.4px;color:#3a383a;-webkit-text-stroke:0.45px #3a383a;">AL</span>
<span class="t" style="left:243.50px;top:525.79px;font-size:8.4px;color:#3a383a;-webkit-text-stroke:0.45px #3a383a;">BR</span>
<span class="t" style="left:329.60px;top:525.79px;font-size:8.4px;color:#3a383a;-webkit-text-stroke:0.45px #3a383a;">JO</span>
<span class="t" style="left:357.30px;top:525.79px;font-size:8.4px;color:#3a383a;-webkit-text-stroke:0.45px #3a383a;">MA</span>
<span class="t" style="left:388.50px;top:525.79px;font-size:8.4px;color:#3a383a;-webkit-text-stroke:0.45px #3a383a;">NI</span>
<span class="t" style="left:444.40px;top:525.79px;font-size:8.4px;color:#3a383a;-webkit-text-stroke:0.45px #3a383a;">TR</span>
<span class="t" style="left:181.47px;top:559.15px;font-size:8.8px;color:#3e706a;letter-spacing:-0.792px;-webkit-text-stroke:0.15px #3e706a;">100%</span>
<span class="t" style="left:215.36px;top:558.13px;font-size:10px;color:#75726b;-webkit-text-stroke:0.4px #75726b;">—</span>
<span class="t" style="left:244.04px;top:558.13px;font-size:10px;color:#75726b;-webkit-text-stroke:0.4px #75726b;">—</span>
<span class="t" style="left:271.72px;top:559.15px;font-size:8.8px;color:#6a6761;letter-spacing:-0.792px;-webkit-text-stroke:0.15px #6a6761;">0%</span>
<span class="t" style="left:300.40px;top:559.15px;font-size:8.8px;color:#6a6761;letter-spacing:-0.792px;-webkit-text-stroke:0.15px #6a6761;">0%</span>
<span class="t" style="left:330.08px;top:558.13px;font-size:10px;color:#75726b;-webkit-text-stroke:0.4px #75726b;">—</span>
<span class="t" style="left:358.76px;top:558.13px;font-size:10px;color:#75726b;-webkit-text-stroke:0.4px #75726b;">—</span>
<span class="t" style="left:387.44px;top:558.13px;font-size:10px;color:#75726b;-webkit-text-stroke:0.4px #75726b;">—</span>
<span class="t" style="left:416.12px;top:558.13px;font-size:10px;color:#75726b;-webkit-text-stroke:0.4px #75726b;">—</span>
<span class="t" style="left:443.80px;top:559.15px;font-size:8.8px;color:#6a6761;letter-spacing:-0.792px;-webkit-text-stroke:0.15px #6a6761;">0%</span>
<span class="t" style="left:47.30px;top:586.27px;font-size:8.4px;color:#3a383a;-webkit-text-stroke:0.45px #3a383a;">AA</span>
<span class="t" style="left:70.80px;top:582.91px;font-size:14.5px;color:#1f1e1b;letter-spacing:-0.050px;-webkit-text-stroke:0.15px #1f1e1b;">Aaron</span>
<span class="t" style="left:152.79px;top:586.83px;font-size:8.8px;color:#3e706a;letter-spacing:-0.792px;-webkit-text-stroke:0.15px #3e706a;">100%</span>
<span class="t" style="left:214.36px;top:586.83px;font-size:8.8px;color:#b65c4b;letter-spacing:-0.792px;-webkit-text-stroke:0.15px #b65c4b;">2%</span>
<span class="t" style="left:244.04px;top:585.81px;font-size:10px;color:#75726b;-webkit-text-stroke:0.4px #75726b;">—</span>
<span class="t" style="left:271.72px;top:586.83px;font-size:8.8px;color:#b65c4b;letter-spacing:-0.792px;-webkit-text-stroke:0.15px #b65c4b;">6%</span>
<span class="t" style="left:298.29px;top:586.83px;font-size:8.8px;color:#b17d47;letter-spacing:-0.792px;-webkit-text-stroke:0.15px #b17d47;">42%</span>
<span class="t" style="left:330.08px;top:585.81px;font-size:10px;color:#75726b;-webkit-text-stroke:0.4px #75726b;">—</span>
<span class="t" style="left:358.76px;top:585.81px;font-size:10px;color:#75726b;-webkit-text-stroke:0.4px #75726b;">—</span>
<span class="t" style="left:386.44px;top:586.83px;font-size:8.8px;color:#6a6761;letter-spacing:-0.792px;-webkit-text-stroke:0.15px #6a6761;">0%</span>
<span class="t" style="left:416.12px;top:585.81px;font-size:10px;color:#75726b;-webkit-text-stroke:0.4px #75726b;">—</span>
<span class="t" style="left:444.80px;top:585.81px;font-size:10px;color:#75726b;-webkit-text-stroke:0.4px #75726b;">—</span>
<span class="t" style="left:46.80px;top:614.95px;font-size:8.4px;color:#3a383a;-webkit-text-stroke:0.45px #3a383a;">AM</span>
<span class="t" style="left:70.80px;top:611.59px;font-size:14.5px;color:#1f1e1b;letter-spacing:-0.380px;-webkit-text-stroke:0.15px #1f1e1b;">Amanda</span>
<span class="t" style="left:158.00px;top:615.50px;font-size:10px;color:#75726b;-webkit-text-stroke:0.4px #75726b;">—</span>
<span class="t" style="left:185.68px;top:615.51px;font-size:8.8px;color:#b65c4b;letter-spacing:-0.792px;-webkit-text-stroke:0.15px #b65c4b;">2%</span>
<span class="t" style="left:244.04px;top:615.50px;font-size:10px;color:#75726b;-webkit-text-stroke:0.4px #75726b;">—</span>
<span class="t" style="left:272.72px;top:615.50px;font-size:10px;color:#75726b;-webkit-text-stroke:0.4px #75726b;">—</span>
<span class="t" style="left:301.40px;top:615.50px;font-size:10px;color:#75726b;-webkit-text-stroke:0.4px #75726b;">—</span>
<span class="t" style="left:329.08px;top:615.51px;font-size:8.8px;color:#6a6761;letter-spacing:-0.792px;-webkit-text-stroke:0.15px #6a6761;">0%</span>
<span class="t" style="left:358.76px;top:615.50px;font-size:10px;color:#75726b;-webkit-text-stroke:0.4px #75726b;">—</span>
<span class="t" style="left:387.44px;top:615.50px;font-size:10px;color:#75726b;-webkit-text-stroke:0.4px #75726b;">—</span>
<span class="t" style="left:416.12px;top:615.50px;font-size:10px;color:#75726b;-webkit-text-stroke:0.4px #75726b;">—</span>
<span class="t" style="left:444.80px;top:615.50px;font-size:10px;color:#75726b;-webkit-text-stroke:0.4px #75726b;">—</span>
<span class="t" style="left:47.30px;top:643.63px;font-size:8.4px;color:#3a383a;-webkit-text-stroke:0.45px #3a383a;">BR</span>
<span class="t" style="left:69.80px;top:641.27px;font-size:14.5px;color:#1f1e1b;letter-spacing:0.083px;-webkit-text-stroke:0.15px #1f1e1b;">Brandon</span>
<span class="t" style="left:158.00px;top:644.17px;font-size:10px;color:#75726b;-webkit-text-stroke:0.4px #75726b;">—</span>
<span class="t" style="left:186.68px;top:644.17px;font-size:10px;color:#75726b;-webkit-text-stroke:0.4px #75726b;">—</span>
<span class="t" style="left:215.36px;top:644.17px;font-size:10px;color:#75726b;-webkit-text-stroke:0.4px #75726b;">—</span>
<span class="t" style="left:271.72px;top:645.19px;font-size:8.8px;color:#6a6761;letter-spacing:-0.792px;-webkit-text-stroke:0.15px #6a6761;">0%</span>
<span class="t" style="left:301.40px;top:644.17px;font-size:10px;color:#75726b;-webkit-text-stroke:0.4px #75726b;">—</span>
<span class="t" style="left:330.08px;top:644.17px;font-size:10px;color:#75726b;-webkit-text-stroke:0.4px #75726b;">—</span>
<span class="t" style="left:357.76px;top:645.19px;font-size:8.8px;color:#6a6761;letter-spacing:-0.792px;-webkit-text-stroke:0.15px #6a6761;">0%</span>
<span class="t" style="left:387.44px;top:644.17px;font-size:10px;color:#75726b;-webkit-text-stroke:0.4px #75726b;">—</span>
<span class="t" style="left:415.12px;top:645.19px;font-size:8.8px;color:#6a6761;letter-spacing:-0.792px;-webkit-text-stroke:0.15px #6a6761;">0%</span>
<span class="t" style="left:444.80px;top:644.17px;font-size:10px;color:#75726b;-webkit-text-stroke:0.4px #75726b;">—</span>
<span class="t" style="left:69.80px;top:668.95px;font-size:14.5px;color:#1f1e1b;letter-spacing:0.183px;-webkit-text-stroke:0.15px #1f1e1b;">Michael</span>
<span class="t" style="left:157.00px;top:672.87px;font-size:8.8px;color:#6a6761;letter-spacing:-0.792px;-webkit-text-stroke:0.15px #6a6761;">0%</span>
<span class="t" style="left:185.68px;top:672.87px;font-size:8.8px;color:#b65c4b;letter-spacing:-0.792px;-webkit-text-stroke:0.15px #b65c4b;">6%</span>
<span class="t" style="left:215.36px;top:671.86px;font-size:10px;color:#75726b;-webkit-text-stroke:0.4px #75726b;">—</span>
<span class="t" style="left:243.04px;top:672.87px;font-size:8.8px;color:#6a6761;letter-spacing:-0.792px;-webkit-text-stroke:0.15px #6a6761;">0%</span>
<span class="t" style="left:298.29px;top:672.87px;font-size:8.8px;color:#b65c4b;letter-spacing:-0.792px;-webkit-text-stroke:0.15px #b65c4b;">13%</span>
<span class="t" style="left:330.08px;top:671.86px;font-size:10px;color:#75726b;-webkit-text-stroke:0.4px #75726b;">—</span>
<span class="t" style="left:357.76px;top:672.87px;font-size:8.8px;color:#6a6761;letter-spacing:-0.792px;-webkit-text-stroke:0.15px #6a6761;">0%</span>
<span class="t" style="left:386.44px;top:672.87px;font-size:8.8px;color:#6a6761;letter-spacing:-0.792px;-webkit-text-stroke:0.15px #6a6761;">0%</span>
<span class="t" style="left:415.12px;top:672.87px;font-size:8.8px;color:#6a6761;letter-spacing:-0.792px;-webkit-text-stroke:0.15px #6a6761;">0%</span>
<span class="t" style="left:444.80px;top:671.86px;font-size:10px;color:#75726b;-webkit-text-stroke:0.4px #75726b;">—</span>
<span class="t" style="left:69.80px;top:697.63px;font-size:14.5px;color:#1f1e1b;letter-spacing:-0.220px;-webkit-text-stroke:0.15px #1f1e1b;">Lauren</span>
<span class="t" style="left:157.00px;top:701.55px;font-size:8.8px;color:#6a6761;letter-spacing:-0.792px;-webkit-text-stroke:0.15px #6a6761;">0%</span>
<span class="t" style="left:183.57px;top:701.55px;font-size:8.8px;color:#b17d47;letter-spacing:-0.792px;-webkit-text-stroke:0.15px #b17d47;">42%</span>
<span class="t" style="left:215.36px;top:700.53px;font-size:10px;color:#75726b;-webkit-text-stroke:0.4px #75726b;">—</span>
<span class="t" style="left:244.04px;top:700.53px;font-size:10px;color:#75726b;-webkit-text-stroke:0.4px #75726b;">—</span>
<span class="t" style="left:269.61px;top:701.55px;font-size:8.8px;color:#b65c4b;letter-spacing:-0.792px;-webkit-text-stroke:0.15px #b65c4b;">13%</span>
<span class="t" style="left:330.08px;top:700.53px;font-size:10px;color:#75726b;-webkit-text-stroke:0.4px #75726b;">—</span>
<span class="t" style="left:358.76px;top:700.53px;font-size:10px;color:#75726b;-webkit-text-stroke:0.4px #75726b;">—</span>
<span class="t" style="left:386.44px;top:701.55px;font-size:8.8px;color:#6a6761;letter-spacing:-0.792px;-webkit-text-stroke:0.15px #6a6761;">0%</span>
<span class="t" style="left:416.12px;top:700.53px;font-size:10px;color:#75726b;-webkit-text-stroke:0.4px #75726b;">—</span>
<span class="t" style="left:444.80px;top:700.53px;font-size:10px;color:#75726b;-webkit-text-stroke:0.4px #75726b;">—</span>
<span class="t" style="left:47.30px;top:729.67px;font-size:8.4px;color:#3a383a;-webkit-text-stroke:0.45px #3a383a;">JO</span>
<span class="t" style="left:70.80px;top:727.31px;font-size:14.5px;color:#1f1e1b;letter-spacing:0.400px;-webkit-text-stroke:0.15px #1f1e1b;">Jo</span>
<span class="t" style="left:158.00px;top:730.21px;font-size:10px;color:#75726b;-webkit-text-stroke:0.4px #75726b;">—</span>
<span class="t" style="left:186.68px;top:730.21px;font-size:10px;color:#75726b;-webkit-text-stroke:0.4px #75726b;">—</span>
<span class="t" style="left:214.36px;top:731.23px;font-size:8.8px;color:#6a6761;letter-spacing:-0.792px;-webkit-text-stroke:0.15px #6a6761;">0%</span>
<span class="t" style="left:244.04px;top:730.21px;font-size:10px;color:#75726b;-webkit-text-stroke:0.4px #75726b;">—</span>
<span class="t" style="left:272.72px;top:730.21px;font-size:10px;color:#75726b;-webkit-text-stroke:0.4px #75726b;">—</span>
<span class="t" style="left:301.40px;top:730.21px;font-size:10px;color:#75726b;-webkit-text-stroke:0.4px #75726b;">—</span>
<span class="t" style="left:358.76px;top:730.21px;font-size:10px;color:#75726b;-webkit-text-stroke:0.4px #75726b;">—</span>
<span class="t" style="left:387.44px;top:730.21px;font-size:10px;color:#75726b;-webkit-text-stroke:0.4px #75726b;">—</span>
<span class="t" style="left:416.12px;top:730.21px;font-size:10px;color:#75726b;-webkit-text-stroke:0.4px #75726b;">—</span>
<span class="t" style="left:444.80px;top:730.21px;font-size:10px;color:#75726b;-webkit-text-stroke:0.4px #75726b;">—</span>
<div style="left:0;top:0;width:1418px;height:4px;background:#0b0b0d"></div>
<div style="left:0;top:4px;width:1411px;height:43px;background:#151411"></div>
<svg style="left:14px;top:16px" width="18" height="18" viewBox="14 16 18 18"><rect x="20.300" y="17.800" width="9.900" height="9.900" rx="2" fill="#f6b06f"/><rect x="15.900" y="22.600" width="10.100" height="9.800" rx="2" fill="#f0886a"/><rect x="20.300" y="22.600" width="5.700" height="5.100" fill="#1a120c"/></svg>
<svg style="left:176px;top:16px" width="20" height="18" viewBox="176 16 20 18"><rect x="177.900" y="18.6" width="16.400" height="2.200" rx=".6" fill="#eeece7"/><rect x="177.900" y="24.0" width="16.400" height="2.200" rx=".6" fill="#eeece7"/><rect x="177.900" y="29.4" width="16.400" height="2.200" rx=".6" fill="#eeece7"/></svg>
<div style="left:212px;top:4px;width:1px;height:42px;background:#3b3833"></div>
<div style="left:1028.600px;top:8.600px;width:81.800px;height:33.200px;border-radius:4.500px;background:#f0efeb"></div>
<svg style="left:1318px;top:10px" width="32" height="32" viewBox="1318 10 32 32"><defs><linearGradient id="hg" x1="0" y1="0.300" x2="1" y2="0.600"><stop offset="0" stop-color="#f49f5f"/><stop offset="0.550" stop-color="#ef7b65"/><stop offset="1" stop-color="#da7aaa"/></linearGradient><radialGradient id="hg2" cx="1324" cy="37" r="9" gradientUnits="userSpaceOnUse"><stop offset="0" stop-color="#cf78d6" stop-opacity=".9"/><stop offset="1" stop-color="#cf78d6" stop-opacity="0"/></radialGradient></defs><path id="hb" d="M1334.200 12.400 a12.400 12.400 0 1 1 -6.800 22.800 q-2.300 1.500 -5 1.600 q1.700 -1.900 1.800 -4.700 a12.400 12.400 0 0 1 10 -19.700z" fill="url(#hg)"/><path d="M1334.200 12.400 a12.400 12.400 0 1 1 -6.800 22.800 q-2.300 1.500 -5 1.600 q1.700 -1.900 1.800 -4.700 a12.400 12.400 0 0 1 10 -19.700z" fill="url(#hg2)"/><path d="M1330.850 21.700 A3 3 0 1 1 1335.700 24.500 C1334.500 25.300 1333.800 25.800 1333.800 26.900" fill="none" stroke="#fff" stroke-width="1.650" stroke-linecap="round"/><circle cx="1333.800" cy="31.700" r="1.150" fill="#fff"/></svg>
<svg style="left:1366px;top:10px" width="32" height="30" viewBox="1366 10 32 30"><defs><clipPath id="ua"><circle cx="1380.600" cy="25" r="12"/></clipPath></defs><circle cx="1380.600" cy="25" r="12.800" fill="#e5aca2"/><g clip-path="url(#ua)"><rect x="1366" y="10" width="32" height="30" fill="#dfe3e8"/><path d="M1383 21.500 L1387.400 20.500 L1390.800 33 L1383 33z" fill="#2a211d"/><rect x="1372.300" y="28.500" width="18" height="5" rx="1.500" fill="#33271f"/><rect x="1366" y="32.500" width="32" height="7" fill="#86673f"/><ellipse cx="1375.500" cy="34" rx="2" ry="1.100" fill="#cdbda8"/><ellipse cx="1381" cy="35.200" rx="1.600" ry=".9" fill="#b79a6d"/><ellipse cx="1386.500" cy="34.300" rx="2.200" ry="1" fill="#a98c63"/><ellipse cx="1372.100" cy="20.900" rx="2.100" ry="1.900" fill="#1e1a19"/><ellipse cx="1385.200" cy="19.300" rx="2.100" ry="1.900" fill="#1e1a19"/><ellipse cx="1378.800" cy="24.300" rx="6.300" ry="6.800" fill="#f5f3ee"/><ellipse cx="1382.800" cy="25.500" rx="2.400" ry="4.600" fill="#b4afa8"/><ellipse cx="1377" cy="30" rx="3.300" ry="1.800" fill="#e9e6df"/><circle cx="1375.900" cy="22.700" r="1.100" fill="#3a2a22"/><circle cx="1381.300" cy="21.800" r="1.100" fill="#3a2a22"/><ellipse cx="1378.800" cy="25.900" rx="1.100" ry="1.400" fill="#eaa6ab"/></g><circle cx="1390.600" cy="17.200" r="4.500" fill="#fff"/><circle cx="1390.600" cy="17.200" r="2.750" fill="#5a6fd8"/></svg>
<div style="left:0;top:640px;width:27px;height:116px;background:radial-gradient(ellipse 34px 100px at 0% 100%, rgba(0,0,0,.09), rgba(0,0,0,0) 100%)"></div>
<div style="left:1383px;top:47px;width:28px;height:712px;background:#fdfdfc"></div>
<div style="left:1411px;top:4px;width:7px;height:754px;background:#e4e4e4"></div>
<div style="left:0;top:755.500px;width:1418px;height:2.500px;background:#0a0a0a"></div>
<span class="t" style="left:32.60px;top:16.49px;font-size:19.5px;color:#fbfaf7;letter-spacing:0.440px;-webkit-text-stroke:0.2px #fbfaf7;">HumanSignal</span>
<span class="t" style="left:230.60px;top:18.15px;font-size:14px;color:#cdc8be;letter-spacing:0.429px;-webkit-text-stroke:0.15px #cdc8be;">Projects</span>
<span class="t" style="left:295.10px;top:16.76px;font-size:18px;color:#b9b4aa;-webkit-text-stroke:0.15px #b9b4aa;">/</span>
<span class="t" style="left:310.60px;top:18.15px;font-size:14px;color:#7a766e;letter-spacing:0.080px;-webkit-text-stroke:0.15px #7a766e;">Images</span>
<span class="t" style="left:368.10px;top:16.76px;font-size:18px;color:#b9b4aa;-webkit-text-stroke:0.15px #b9b4aa;">/</span>
<span class="t" style="left:383.40px;top:18.15px;font-size:14px;color:#f5f3ee;letter-spacing:0.442px;-webkit-text-stroke:0.25px #f5f3ee;">Plant identification</span>
<span class="t" style="left:946.40px;top:18.15px;font-size:14px;color:#f5f3ee;letter-spacing:0.175px;-webkit-text-stroke:0.25px #f5f3ee;">Dashboard</span>
<span class="t" style="left:1038.90px;top:18.15px;font-size:14px;color:#1f1d1a;letter-spacing:0.317px;-webkit-text-stroke:0.25px #1f1d1a;">Members</span>
<span class="t" style="left:1122.00px;top:18.15px;font-size:14px;color:#f5f3ee;letter-spacing:0.036px;-webkit-text-stroke:0.25px #f5f3ee;">Data Manager</span>
<span class="t" style="left:1235.50px;top:18.15px;font-size:14px;color:#f5f3ee;letter-spacing:0.514px;-webkit-text-stroke:0.25px #f5f3ee;">Settings</span>
</div></body></html>
